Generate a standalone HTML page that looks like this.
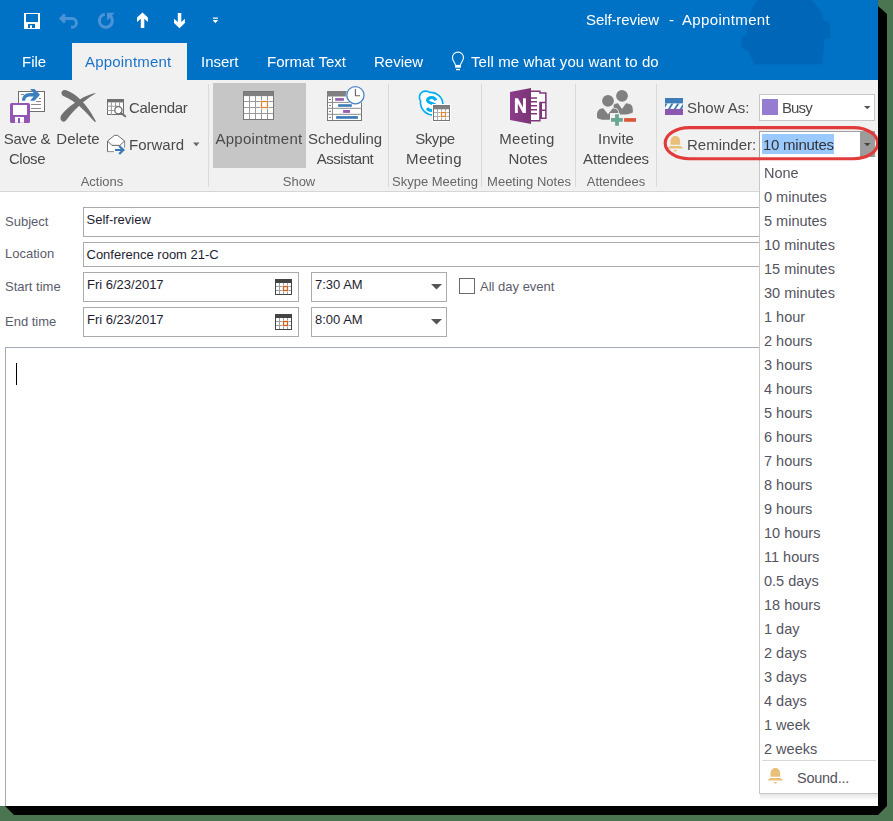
<!DOCTYPE html><html><head><meta charset="utf-8"><style>
html,body{margin:0;padding:0;width:893px;height:821px;overflow:hidden;background:#4B7550;font-family:"Liberation Sans",sans-serif}
.t{position:absolute;white-space:pre}
.g{will-change:transform}
.r{position:absolute}
svg{overflow:visible}
</style></head><body>
<div class="r" style="left:5px;top:6px;width:882px;height:809px;background:#000;clip-path:polygon(0 0,873px 0,882px 8px,882px 800px,873px 809px,9px 809px,0 800px)"></div>
<div style="position:absolute;left:0;top:0;width:878px;height:806px;overflow:hidden">
<div class="r" style="left:0px;top:0px;width:878px;height:806px;background:#fff"></div>
<div class="r" style="left:0px;top:0px;width:878px;height:80px;background:#0072C6"></div>
<svg class="r" style="left:740px;top:0px" width="95" height="66" viewBox="0 0 95 66"><path fill="#0067B8" d="M17.6 0H71.4C78 6 82.5 13 84 20.5L90 23L91 37.5L84.5 39.5C84 48 83 56 82 64.5H15C12 59 10 55 8.5 52L1.5 47.5L1.5 37L7 35C7 21 10.5 8 17.6 0Z"/></svg>
<svg class="r" style="left:24px;top:13px" width="16" height="16" viewBox="0 0 16 16"><path fill="#fff" fill-rule="evenodd" d="M0 0H16V16H0Z M2 1V9H14V1Z M4 11V15H6V12.3H8V15H11V11Z"/></svg>
<svg class="r" style="left:58px;top:12px" width="22" height="20" viewBox="0 0 22 20"><path fill="none" stroke="#4A93D6" stroke-width="3" d="M3 6.5H14A4.4 4.4 0 0 1 14 15.3H13"/><path fill="none" stroke="#4A93D6" stroke-width="3" d="M7 2.6L3 6.5L7 10.4"/></svg>
<svg class="r" style="left:97px;top:12px" width="19" height="18" viewBox="0 0 19 18"><path fill="none" stroke="#4A93D6" stroke-width="3" d="M7.8 2.35A6.5 6.5 0 1 0 13.1 3.9"/><path fill="#4A93D6" d="M9.9 0.8H17.6L10.2 8.8Z"/></svg>
<svg class="r" style="left:137px;top:12px" width="11" height="17" viewBox="0 0 11 17"><path fill="#fff" d="M5.5 0.4L10.9 5.6V9.9L7.3 6.8V16H3.8V6.8L0 9.9V5.6Z"/></svg>
<svg class="r" style="left:174px;top:12.8px" width="11" height="17" viewBox="0 0 11 17"><path fill="#fff" d="M5.5 15.3L10.9 10.1V5.8L7.3 8.9V0H3.8V8.9L0 5.8V10.1Z"/></svg>
<svg class="r" style="left:212px;top:16.5px" width="7" height="7" viewBox="0 0 7 7"><path fill="#fff" d="M0.9 0.6H5.9V1.7H0.9Z M0.6 3H6.2L3.4 6.2Z"/></svg>
<div class="t g" style="left:585.5px;top:12.00px;font-size:15px;line-height:15px;color:#fff;letter-spacing:-0.1px">Self-review</div>
<div class="t g" style="left:669.3px;top:12.00px;font-size:15px;line-height:15px;color:#fff;">-</div>
<div class="t g" style="left:681.6px;top:12.00px;font-size:15px;line-height:15px;color:#fff;letter-spacing:0.35px">Appointment</div>
<div class="r" style="left:72px;top:43px;width:115px;height:37px;background:#F1F1F1"></div>
<div class="t g" style="left:22px;top:53.80px;font-size:15px;line-height:15px;color:#fff;">File</div>
<div class="t g" style="left:84.5px;top:53.80px;font-size:15px;line-height:15px;color:#1A73C8;letter-spacing:0.2px">Appointment</div>
<div class="t g" style="left:201px;top:53.80px;font-size:15px;line-height:15px;color:#fff;">Insert</div>
<div class="t g" style="left:266.5px;top:53.80px;font-size:15px;line-height:15px;color:#fff;">Format Text</div>
<div class="t g" style="left:373.5px;top:53.80px;font-size:15px;line-height:15px;color:#fff;">Review</div>
<svg class="r" style="left:451px;top:52px" width="14" height="19" viewBox="0 0 14 19"><path fill="none" stroke="#fff" stroke-width="1.1" d="M4.5 13.2C4.3 10.8 1.45 9 1.45 5.6A5.5 5.5 0 0 1 12.45 5.6C12.45 9 9.6 10.8 9.4 13.2"/><rect x="4.1" y="12.9" width="5.8" height="2.8" fill="#fff"/><rect x="5" y="16.9" width="4" height="1.3" fill="#fff"/></svg>
<div class="t g" style="left:471px;top:53.80px;font-size:15px;line-height:15px;color:#fff;letter-spacing:0.1px">Tell me what you want to do</div>
<div class="r" style="left:0px;top:80px;width:878px;height:111px;background:#F1F1F1"></div>
<div class="r" style="left:0px;top:191px;width:878px;height:1px;background:#D6D6D6"></div>
<div class="r" style="left:208px;top:84px;width:1px;height:103px;background:#DADADA"></div>
<div class="r" style="left:388px;top:84px;width:1px;height:103px;background:#DADADA"></div>
<div class="r" style="left:481px;top:84px;width:1px;height:103px;background:#DADADA"></div>
<div class="r" style="left:575px;top:84px;width:1px;height:103px;background:#DADADA"></div>
<div class="r" style="left:656px;top:84px;width:1px;height:103px;background:#DADADA"></div>
<svg class="r" style="left:10px;top:88px" width="36" height="36" viewBox="0 0 36 36">
<rect x="8.5" y="3.5" width="26" height="20" fill="#fff" stroke="#6e6e6e" stroke-width="1"/>
<path stroke="#8a8a8a" stroke-width="1" d="M11 6.5H14 M29 10.5H31 M26 13.5H31 M21 16.5H31 M21 20.5H31"/>
<path fill="#3D7FC1" d="M12 12.8C12 8 15 5 20 5H23.6L20.1 1H24.5L30 6.8L24.5 12.8H20.1L23.6 8.6H20C17.3 8.6 15.2 10 15.2 12.8Z"/>
<path fill="#9356B4" fill-rule="evenodd" d="M1.5 15H18.5A1.5 1.5 0 0 1 20 16.5V33.5A1.5 1.5 0 0 1 18.5 35H1.5A1.5 1.5 0 0 1 0 33.5V16.5A1.5 1.5 0 0 1 1.5 15Z M3 17V27H17V17Z M5 29V34.5H8V30H10V34.5H14V29Z"/>
<path fill="#fff" d="M3 17H17V27H3Z M5 29V34.5H8V30H10V34.5H14V29Z"/>
</svg>
<div class="t g" style="left:-73.4px;width:200px;text-align:center;top:131.10px;font-size:15px;line-height:15px;color:#4a4a4a;letter-spacing:-0.3px">Save &amp;</div>
<div class="t g" style="left:-73px;width:200px;text-align:center;top:151.10px;font-size:15px;line-height:15px;color:#4a4a4a;letter-spacing:-0.45px">Close</div>
<svg class="r" style="left:56px;top:86px" width="44" height="40" viewBox="0 0 44 40">
<path fill="#717171" d="M7.2 9.9C4.2 8.1 5.4 3.1 9.4 4.1C16.5 6.4 23.5 12 28.8 18.3C33.3 23.8 37 30 40 35.6L38.8 35.9C34.5 31.2 29.8 26 23.8 20.4C18 15 12 12 7.2 9.9Z"/>
<path fill="#717171" d="M5.6 34.8C3.7 32.8 4.4 29.8 6.8 27.2C12.8 20.7 21.5 14.6 28 11.1C32.3 8.9 36.2 7.5 40.2 6.9C36.2 9.3 31.8 12.3 27.4 16.1C21 21.6 15.2 27.6 10.6 33.8C9.1 35.8 7 36.3 5.6 34.8Z"/>
</svg>
<div class="t g" style="left:-21.700000000000003px;width:200px;text-align:center;top:131.10px;font-size:15px;line-height:15px;color:#4a4a4a;">Delete</div>
<svg class="r" style="left:106px;top:98px" width="22" height="22" viewBox="0 0 22 22">
<rect x="1.5" y="1.5" width="16" height="15" fill="#fff" stroke="#6e6e6e"/>
<rect x="1" y="1" width="17" height="3.4" fill="#707070"/>
<path stroke="#9a9a9a" d="M5.4 4.4V17 M9.5 4.4V12 M13.5 4.4V9 M1 8.2H12 M1 12.5H8"/>
<circle cx="12.4" cy="12.3" r="3.6" fill="#fff" stroke="#6e6e6e" stroke-width="1.3"/>
<path stroke="#6e6e6e" stroke-width="2" stroke-linecap="round" d="M15 15L19.2 18.3"/>
</svg>
<div class="t g" style="left:128.5px;top:100.30px;font-size:15px;line-height:15px;color:#4a4a4a;letter-spacing:-0.3px">Calendar</div>
<svg class="r" style="left:106px;top:133px" width="22" height="22" viewBox="0 0 22 22">
<path fill="#fff" stroke="#6a6a6a" stroke-width="1" d="M1.5 8L8.4 2.4H11.6L18.6 8V14.5 M1.5 8V18.6H7.8"/>
<path fill="#fff" d="M2 8.2L5.9 12.4H13.8L18.2 8.2V14.5H9V18.2H2Z"/>
<path fill="none" stroke="#6a6a6a" stroke-width="1" d="M1.5 8L5.9 12.4H13.8L18.6 8"/>
<path fill="none" stroke="#3A76B8" stroke-width="2.2" d="M9 17H17.5 M13.2 13L17.4 17L13.2 21"/>
</svg>
<div class="t g" style="left:128.5px;top:137.30px;font-size:15px;line-height:15px;color:#4a4a4a;">Forward</div>
<div class="t g" style="left:2px;width:200px;text-align:center;top:174.80px;font-size:13px;line-height:13px;color:#666;">Actions</div>
<svg class="r" style="left:193px;top:142px" width="7" height="5" viewBox="0 0 7 5"><path fill="#666" d="M0 0.5H6.5L3.25 4.2Z"/></svg>
<div class="r" style="left:213px;top:83px;width:93px;height:85px;background:#C6C6C6"></div>
<svg class="r" style="left:243px;top:91px" width="31" height="29" viewBox="0 0 31 29"><rect x="0" y="0" width="31" height="29" fill="#fff"/><line x1="6.50" y1="4.4" x2="6.50" y2="29" stroke="#9a9a9a" stroke-width="1"/><line x1="12.50" y1="4.4" x2="12.50" y2="29" stroke="#9a9a9a" stroke-width="1"/><line x1="18.50" y1="4.4" x2="18.50" y2="29" stroke="#9a9a9a" stroke-width="1"/><line x1="24.50" y1="4.4" x2="24.50" y2="29" stroke="#9a9a9a" stroke-width="1"/><line x1="0" y1="10.50" x2="31" y2="10.50" stroke="#9a9a9a" stroke-width="1"/><line x1="0" y1="16.50" x2="31" y2="16.50" stroke="#9a9a9a" stroke-width="1"/><line x1="0" y1="22.50" x2="31" y2="22.50" stroke="#9a9a9a" stroke-width="1"/><rect x="0" y="0" width="31" height="5.1000000000000005" fill="#808080"/><rect x="0.5" y="0.5" width="30" height="28" fill="none" stroke="#777" stroke-width="1"/><rect x="17.5" y="9.5" width="8.0" height="8.0" fill="#fff"/><rect x="18.5" y="10.5" width="6.0" height="6.0" fill="#fff" stroke="#E7822B" stroke-width="1.2"/></svg>
<div class="t g" style="left:159px;width:200px;text-align:center;top:130.50px;font-size:15px;line-height:15px;color:#4a4a4a;letter-spacing:0.25px">Appointment</div>
<svg class="r" style="left:326px;top:85px" width="40" height="37" viewBox="0 0 40 37">
<rect x="1.5" y="6.5" width="34" height="29" fill="#fff" stroke="#777"/>
<rect x="1" y="6" width="35" height="5.5" fill="#808080"/>
<path stroke="#8a8a8a" d="M6.5 11.5V35.5 M1 17.4H36 M1 23.3H36 M1 29.3H36"/>
<path stroke="#777" d="M3 14.5H5 M3 20.4H5 M3 26.4H5 M3 32.4H5"/>
<rect x="9.2" y="13.1" width="8.7" height="2.7" fill="#9A5CB4"/>
<rect x="12.1" y="19.2" width="13.7" height="2.6" fill="#3D7AB8"/>
<rect x="17.1" y="25" width="6.9" height="2.9" fill="#9A5CB4"/>
<rect x="10.1" y="31.1" width="21.8" height="2.7" fill="#3D7AB8"/>
<circle cx="29.4" cy="10.2" r="9.6" fill="#F1F1F1"/>
<circle cx="29.4" cy="10.2" r="8.6" fill="#fff" stroke="#4A86C5" stroke-width="1.3"/>
<path fill="none" stroke="#666" stroke-width="1.1" d="M29.4 4V10.7H34"/>
</svg>
<div class="t g" style="left:244.5px;width:200px;text-align:center;top:130.50px;font-size:15px;line-height:15px;color:#4a4a4a;">Scheduling</div>
<div class="t g" style="left:245.2px;width:200px;text-align:center;top:150.80px;font-size:15px;line-height:15px;color:#4a4a4a;letter-spacing:-0.5px">Assistant</div>
<div class="t g" style="left:198.5px;width:200px;text-align:center;top:174.80px;font-size:13px;line-height:13px;color:#666;">Show</div>
<svg class="r" style="left:417px;top:89px" width="36" height="34" viewBox="0 0 36 34">
<path fill="#fff" stroke="#00AFF0" stroke-width="1.7" d="M6.8 2.4C8.8 1.8 11.2 2.2 13 3.5C19.5 3 25.3 7.9 25.8 14.4C25.9 15.4 25.9 16.4 25.7 17.4C27.3 19.6 27 23 24.8 25C22.9 26.8 20 27.2 17.8 26.1C11 27 4.6 21.9 3.6 15.4C3.4 14.2 3.4 12.9 3.6 11.8C1.6 9.3 2.2 5.4 4.8 3.4C5.4 2.9 6.1 2.6 6.8 2.4Z"/>
<path fill="none" stroke="#00AFF0" stroke-width="3" d="M19 11.2C17.9 9.3 16.3 8.6 14.6 8.6C12.1 8.6 10.4 9.9 10.6 11.7C10.8 13.3 13.2 14 15.4 14.6C17.6 15.2 19 16.4 18.8 18.4C18.6 20.6 16.4 21.5 14.4 21.5C12.5 21.5 11 20.7 10 19.2"/>
</svg>
<svg class="r" style="left:432px;top:104px" width="19" height="18" viewBox="0 0 19 18"><rect x="0" y="0" width="19" height="18" fill="#fff"/><rect x="1" y="1" width="17" height="16" fill="#fff"/><line x1="5.50" y1="4.6" x2="5.50" y2="17" stroke="#b0b0b0" stroke-width="1"/><line x1="9.50" y1="4.6" x2="9.50" y2="17" stroke="#b0b0b0" stroke-width="1"/><line x1="13.50" y1="4.6" x2="13.50" y2="17" stroke="#b0b0b0" stroke-width="1"/><line x1="1" y1="8.50" x2="18" y2="8.50" stroke="#b0b0b0" stroke-width="1"/><line x1="1" y1="12.50" x2="18" y2="12.50" stroke="#b0b0b0" stroke-width="1"/><rect x="1" y="1" width="17" height="4.3" fill="#808080"/><rect x="1.5" y="1.5" width="16" height="15" fill="none" stroke="#777" stroke-width="1"/><rect x="8.5" y="7.5" width="6.0" height="6.0" fill="#fff"/><rect x="9.5" y="8.5" width="4.0" height="4.0" fill="#fff" stroke="#E7822B" stroke-width="1.2"/></svg>
<div class="t g" style="left:334.5px;width:200px;text-align:center;top:130.50px;font-size:15px;line-height:15px;color:#4a4a4a;letter-spacing:-0.45px">Skype</div>
<div class="t g" style="left:334.1px;width:200px;text-align:center;top:150.80px;font-size:15px;line-height:15px;color:#4a4a4a;letter-spacing:0.35px">Meeting</div>
<div class="t g" style="left:335.2px;width:200px;text-align:center;top:174.80px;font-size:13px;line-height:13px;color:#666;">Skype Meeting</div>
<svg class="r" style="left:509px;top:87px" width="38" height="38" viewBox="0 0 38 38">
<path fill="#7E3679" d="M20 3.5H31.6V5.3H37.6V32H31.6V34.5H20Z"/><path fill="#fff" d="M21 5H30.2V6.8H36.1V14.8H30.2V33H21Z M33 16.3H36.1V22.6H33Z M33 24.1H36.1V30.5H33Z"/>
<path stroke="#7E3679" stroke-width="1.5" d="M21 11H28 M21 14.7H28 M21 18.7H28 M21 22.7H28 M21 26.8H28"/>

<defs><linearGradient id="on" x1="0" x2="1"><stop offset="0" stop-color="#8C3D8C"/><stop offset="1" stop-color="#7A3575"/></linearGradient></defs>
<path fill="url(#on)" d="M1 5L22 1V37L1 33Z"/>
<path fill="#fff" d="M5.9 11.2H9L14 20.6V11.2H16.9V26H13.8L8.8 16.6V26H5.9Z"/>
</svg>
<div class="t g" style="left:427.20000000000005px;width:200px;text-align:center;top:130.50px;font-size:15px;line-height:15px;color:#4a4a4a;letter-spacing:0.27px">Meeting</div>
<div class="t g" style="left:427.5px;width:200px;text-align:center;top:150.80px;font-size:15px;line-height:15px;color:#4a4a4a;">Notes</div>
<div class="t g" style="left:428.6px;width:200px;text-align:center;top:174.80px;font-size:13px;line-height:13px;color:#666;">Meeting Notes</div>
<svg class="r" style="left:595px;top:88px" width="44" height="40" viewBox="0 0 44 40">
<circle cx="27" cy="7.8" r="5.9" fill="#808080"/>
<path fill="#808080" d="M18.6 17C20 15.8 21.5 15.3 23 15.2L27 21L31 15.2C33 15.3 35 15.8 36.3 17C37.8 18.5 38 21.5 37.8 24.5C35 26.3 31 26.6 27 26.6C24 26.6 21 26.2 18.6 25.6Z"/>
<circle cx="13" cy="12.8" r="6.8" fill="#F1F1F1"/>
<circle cx="13" cy="12.8" r="5.9" fill="#808080"/>
<path fill="#F1F1F1" stroke="#F1F1F1" stroke-width="1.6" d="M2.2 30C1.6 26 2 22.5 5 21C6 20.5 7 20.3 8.2 20.2L13 26.2L17.8 20.2C19.5 20.4 21 20.8 22 21.6C23.4 23 23.5 26 23.4 29.5C20 31.5 15 31.8 10 31.8C6.5 31.8 3.5 31.2 2.2 30Z"/>
<path fill="#808080" d="M2.2 30C1.6 26 2 22.5 5 21C6 20.5 7 20.3 8.2 20.2L13 26.2L17.8 20.2C19.5 20.4 21 20.8 22 21.6C23.4 23 23.5 26 23.4 29.5C20 31.5 15 31.8 10 31.8C6.5 31.8 3.5 31.2 2.2 30Z"/>
<path fill="#F1F1F1" d="M15 25H24.8V29H28.8V34.8H24.8V38.8H15V34.8H15Z"/>
<path fill="#6AA690" d="M20.1 26.3H23.9V30.1H27.8V33.8H23.9V37.8H20.1V33.8H16V30.1H20.1Z"/>
<path fill="#D9573A" d="M29.1 30.1H41V33.8H29.1Z"/>
</svg>
<div class="t g" style="left:515.8px;width:200px;text-align:center;top:130.50px;font-size:15px;line-height:15px;color:#4a4a4a;">Invite</div>
<div class="t g" style="left:515.5px;width:200px;text-align:center;top:150.80px;font-size:15px;line-height:15px;color:#4a4a4a;letter-spacing:-0.2px">Attendees</div>
<div class="t g" style="left:515.8px;width:200px;text-align:center;top:174.80px;font-size:13px;line-height:13px;color:#666;">Attendees</div>
<svg class="r" style="left:665px;top:98px;overflow:hidden" width="18" height="17" viewBox="0 0 18 17"><rect x="0" y="0" width="18" height="5.6" fill="#3F7DB8"/><rect x="0" y="5.6" width="18" height="5.3" fill="#fff"/><path fill="#3F7DB8" d="M-3.00 10.9L0.40 5.6H2.60L-0.80 10.9Z M2.90 10.9L6.30 5.6H8.50L5.10 10.9Z M8.80 10.9L12.20 5.6H14.40L11.00 10.9Z M14.70 10.9L18.10 5.6H20.30L16.90 10.9Z "/><rect x="0" y="10.9" width="18" height="6.1" fill="#8A58AE"/></svg>
<div class="t g" style="left:687px;top:100.00px;font-size:15px;line-height:15px;color:#4a4a4a;">Show As:</div>
<div class="r" style="left:759px;top:94px;width:116px;height:27px;background:#fff;box-sizing:border-box;border:1px solid #C6C6C6"></div>
<div class="r" style="left:762px;top:99px;width:16px;height:16px;background:#967CD0"></div>
<div class="t g" style="left:781.5px;top:100.00px;font-size:15px;line-height:15px;color:#4a4a4a;letter-spacing:-0.9px">Busy</div>
<svg class="r" style="left:864px;top:106px" width="7" height="4" viewBox="0 0 7 4"><path fill="#555" d="M0 0H6.5L3.25 3.2Z"/></svg>
<svg class="r" style="left:667.5px;top:136px" width="15" height="16" viewBox="0 0 15 16"><path fill="#E8C07A" d="M7.35 0C10.5 0 12.2 2.6 12.2 5.8V8.7H2.5V5.8C2.5 2.6 4.2 0 7.35 0Z M2.3 9.9H12.4L14.7 11.7V12.6H0V11.7Z M5.7 14H8.9C8.9 15 8.2 15.5 7.3 15.5C6.4 15.5 5.7 15 5.7 14Z"/></svg>
<div class="t g" style="left:687px;top:136.80px;font-size:15px;line-height:15px;color:#4a4a4a;">Reminder:</div>
<div class="r" style="left:759px;top:131px;width:116px;height:27px;background:#fff;box-sizing:border-box;border:1px solid #A0A0A0"></div>
<div class="r" style="left:860px;top:131px;width:15px;height:27px;background:#9C9C9C"></div>
<svg class="r" style="left:864px;top:143px" width="7" height="4" viewBox="0 0 7 4"><path fill="#444" d="M0 0H6.5L3.25 3.2Z"/></svg>
<div class="r" style="left:762px;top:134px;width:72px;height:20px;background:#99C9FF"></div>
<div class="t g" style="left:762.5px;top:136.80px;font-size:15px;line-height:15px;color:#333;letter-spacing:-0.25px">10 minutes</div>
<div class="t" style="left:5px;top:214.90px;font-size:13px;line-height:13px;color:#5C5C6C;">Subject</div>
<div class="r" style="left:83px;top:207px;width:800px;height:30px;box-sizing:border-box;border:1px solid #ABABAB;background:#fff"></div>
<div class="t" style="left:86.5px;top:212.50px;font-size:13px;line-height:13px;color:#1E1E30;">Self-review</div>
<div class="t" style="left:5px;top:246.60px;font-size:13px;line-height:13px;color:#5C5C6C;">Location</div>
<div class="r" style="left:83px;top:242px;width:800px;height:25px;box-sizing:border-box;border:1px solid #ABABAB;background:#fff"></div>
<div class="t" style="left:86.5px;top:247.50px;font-size:13px;line-height:13px;color:#1E1E30;">Conference room 21-C</div>
<div class="t" style="left:5px;top:280.30px;font-size:13px;line-height:13px;color:#5C5C6C;">Start time</div>
<div class="r" style="left:83px;top:272px;width:216px;height:30px;box-sizing:border-box;border:1px solid #ABABAB;background:#fff"></div>
<div class="t" style="left:87px;top:278.20px;font-size:13px;line-height:13px;color:#1E1E30;">Fri 6/23/2017</div>
<svg class="r" style="left:275px;top:279px" width="17" height="16" viewBox="0 0 17 16"><rect x="0" y="0" width="17" height="16" fill="#fff"/><line x1="4.50" y1="3.3" x2="4.50" y2="16" stroke="#a0a0a0" stroke-width="1"/><line x1="8.50" y1="3.3" x2="8.50" y2="16" stroke="#a0a0a0" stroke-width="1"/><line x1="12.50" y1="3.3" x2="12.50" y2="16" stroke="#a0a0a0" stroke-width="1"/><line x1="0" y1="7.50" x2="17" y2="7.50" stroke="#a0a0a0" stroke-width="1"/><line x1="0" y1="11.50" x2="17" y2="11.50" stroke="#a0a0a0" stroke-width="1"/><rect x="0" y="0" width="17" height="4.0" fill="#444"/><rect x="0.5" y="0.5" width="16" height="15" fill="none" stroke="#444" stroke-width="1"/><rect x="7.5" y="6.5" width="6.0" height="6.0" fill="#fff"/><rect x="8.5" y="7.5" width="4.0" height="4.0" fill="#fff" stroke="#D4601A" stroke-width="1.3"/></svg>
<div class="r" style="left:311px;top:272px;width:136px;height:30px;box-sizing:border-box;border:1px solid #ABABAB;background:#fff"></div>
<div class="t" style="left:315px;top:278.20px;font-size:13px;line-height:13px;color:#1E1E30;">7:30 AM</div>
<svg class="r" style="left:431px;top:284px" width="11" height="6" viewBox="0 0 11 6"><path fill="#555" d="M0 0H11L5.5 5.6Z"/></svg>
<div class="t" style="left:5px;top:315.00px;font-size:13px;line-height:13px;color:#5C5C6C;">End time</div>
<div class="r" style="left:83px;top:307px;width:216px;height:30px;box-sizing:border-box;border:1px solid #ABABAB;background:#fff"></div>
<div class="t" style="left:87px;top:313.10px;font-size:13px;line-height:13px;color:#1E1E30;">Fri 6/23/2017</div>
<svg class="r" style="left:275px;top:314px" width="17" height="16" viewBox="0 0 17 16"><rect x="0" y="0" width="17" height="16" fill="#fff"/><line x1="4.50" y1="3.3" x2="4.50" y2="16" stroke="#a0a0a0" stroke-width="1"/><line x1="8.50" y1="3.3" x2="8.50" y2="16" stroke="#a0a0a0" stroke-width="1"/><line x1="12.50" y1="3.3" x2="12.50" y2="16" stroke="#a0a0a0" stroke-width="1"/><line x1="0" y1="7.50" x2="17" y2="7.50" stroke="#a0a0a0" stroke-width="1"/><line x1="0" y1="11.50" x2="17" y2="11.50" stroke="#a0a0a0" stroke-width="1"/><rect x="0" y="0" width="17" height="4.0" fill="#444"/><rect x="0.5" y="0.5" width="16" height="15" fill="none" stroke="#444" stroke-width="1"/><rect x="7.5" y="6.5" width="6.0" height="6.0" fill="#fff"/><rect x="8.5" y="7.5" width="4.0" height="4.0" fill="#fff" stroke="#D4601A" stroke-width="1.3"/></svg>
<div class="r" style="left:311px;top:307px;width:136px;height:30px;box-sizing:border-box;border:1px solid #ABABAB;background:#fff"></div>
<div class="t" style="left:315px;top:313.10px;font-size:13px;line-height:13px;color:#1E1E30;">8:00 AM</div>
<svg class="r" style="left:431px;top:319px" width="11" height="6" viewBox="0 0 11 6"><path fill="#555" d="M0 0H11L5.5 5.6Z"/></svg>
<div class="r" style="left:459px;top:278px;width:16px;height:16px;box-sizing:border-box;border:1px solid #6A6A6A;background:#fff"></div>
<div class="t" style="left:480px;top:279.80px;font-size:13px;line-height:13px;color:#5C5C6C;">All day event</div>
<div class="r" style="left:5px;top:347px;width:900px;height:500px;box-sizing:border-box;border:1px solid #A3ABB6"></div>
<div class="r" style="left:16px;top:363px;width:1px;height:22px;background:#000"></div>
<div class="r" style="left:759px;top:157px;width:119px;height:637px;box-sizing:border-box;border:1px solid #C8C8C8;border-right:none;border-top:none;background:#fff"></div>
<div class="r" style="left:760px;top:794px;width:118px;height:6px;background:linear-gradient(#E4E4E4,#fff)"></div>
<div class="t g" style="left:764px;top:165.53px;font-size:14.5px;line-height:14.5px;color:#545460;">None</div>
<div class="t" style="left:764px;top:189.53px;font-size:14.5px;line-height:14.5px;color:#545460;">0 minutes</div>
<div class="t" style="left:764px;top:213.53px;font-size:14.5px;line-height:14.5px;color:#545460;">5 minutes</div>
<div class="t" style="left:764px;top:237.53px;font-size:14.5px;line-height:14.5px;color:#545460;">10 minutes</div>
<div class="t" style="left:764px;top:261.53px;font-size:14.5px;line-height:14.5px;color:#545460;">15 minutes</div>
<div class="t" style="left:764px;top:285.53px;font-size:14.5px;line-height:14.5px;color:#545460;">30 minutes</div>
<div class="t" style="left:764px;top:309.53px;font-size:14.5px;line-height:14.5px;color:#545460;">1 hour</div>
<div class="t" style="left:764px;top:333.53px;font-size:14.5px;line-height:14.5px;color:#545460;">2 hours</div>
<div class="t" style="left:764px;top:357.53px;font-size:14.5px;line-height:14.5px;color:#545460;">3 hours</div>
<div class="t" style="left:764px;top:381.53px;font-size:14.5px;line-height:14.5px;color:#545460;">4 hours</div>
<div class="t" style="left:764px;top:405.53px;font-size:14.5px;line-height:14.5px;color:#545460;">5 hours</div>
<div class="t" style="left:764px;top:429.53px;font-size:14.5px;line-height:14.5px;color:#545460;">6 hours</div>
<div class="t" style="left:764px;top:453.53px;font-size:14.5px;line-height:14.5px;color:#545460;">7 hours</div>
<div class="t" style="left:764px;top:477.53px;font-size:14.5px;line-height:14.5px;color:#545460;">8 hours</div>
<div class="t" style="left:764px;top:501.53px;font-size:14.5px;line-height:14.5px;color:#545460;">9 hours</div>
<div class="t" style="left:764px;top:525.53px;font-size:14.5px;line-height:14.5px;color:#545460;">10 hours</div>
<div class="t" style="left:764px;top:549.53px;font-size:14.5px;line-height:14.5px;color:#545460;">11 hours</div>
<div class="t" style="left:764px;top:573.53px;font-size:14.5px;line-height:14.5px;color:#545460;">0.5 days</div>
<div class="t" style="left:764px;top:597.53px;font-size:14.5px;line-height:14.5px;color:#545460;">18 hours</div>
<div class="t" style="left:764px;top:621.53px;font-size:14.5px;line-height:14.5px;color:#545460;">1 day</div>
<div class="t" style="left:764px;top:645.53px;font-size:14.5px;line-height:14.5px;color:#545460;">2 days</div>
<div class="t" style="left:764px;top:669.53px;font-size:14.5px;line-height:14.5px;color:#545460;">3 days</div>
<div class="t" style="left:764px;top:693.53px;font-size:14.5px;line-height:14.5px;color:#545460;">4 days</div>
<div class="t" style="left:764px;top:717.53px;font-size:14.5px;line-height:14.5px;color:#545460;">1 week</div>
<div class="t" style="left:764px;top:741.53px;font-size:14.5px;line-height:14.5px;color:#545460;">2 weeks</div>
<div class="r" style="left:762px;top:760px;width:114px;height:1px;background:#D8D8D8"></div>
<svg class="r" style="left:768px;top:768px" width="15" height="16" viewBox="0 0 15 16"><path fill="#E8C07A" d="M7.35 0C10.5 0 12.2 2.6 12.2 5.8V8.7H2.5V5.8C2.5 2.6 4.2 0 7.35 0Z M2.3 9.9H12.4L14.7 11.7V12.6H0V11.7Z M5.7 14H8.9C8.9 15 8.2 15.5 7.3 15.5C6.4 15.5 5.7 15 5.7 14Z"/></svg>
<div class="t" style="left:797px;top:770.53px;font-size:14.5px;line-height:14.5px;color:#545460;letter-spacing:-0.25px">Sound...</div>
<svg class="r" style="left:660px;top:122px" width="222" height="42" viewBox="0 0 222 42"><rect x="5.2" y="5.6" width="212.5" height="31.1" rx="24" ry="15.5" fill="none" stroke="#E23B3B" stroke-width="3.1"/></svg>
</div></body></html>
